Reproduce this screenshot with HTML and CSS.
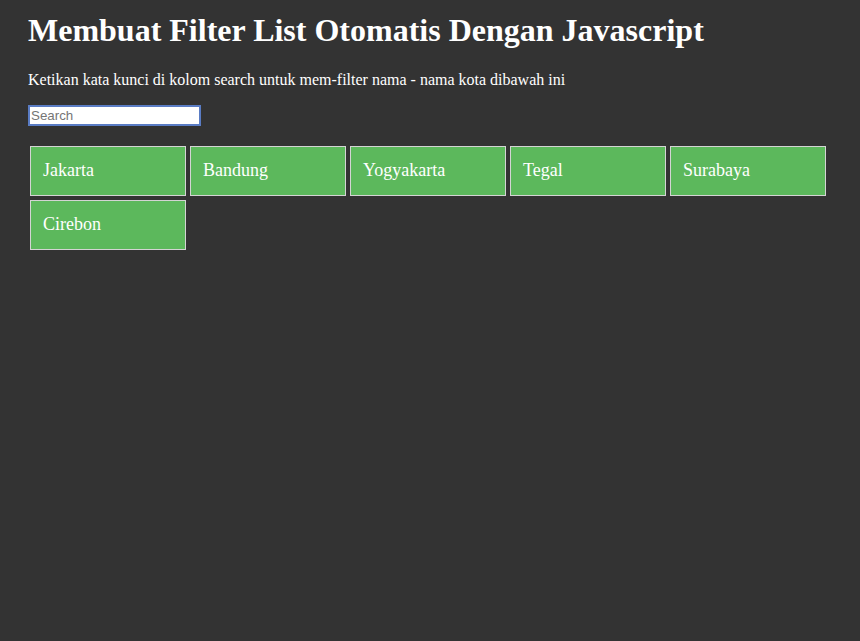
FILE: index.html
```html
<!DOCTYPE html>
<html lang="id">
<head>
<meta charset="utf-8">
<title>Membuat Filter List Otomatis Dengan Javascript</title>
<link rel="stylesheet" href="styles.css">
</head>
<body>
<div class="page">
  <h1 class="title">Membuat Filter List Otomatis Dengan Javascript</h1>
  <p class="desc">Ketikan kata kunci di kolom search untuk mem-filter nama - nama kota dibawah ini</p>
  <input class="search" type="text" placeholder="Search">
  <ul class="cities">
    <li class="city">Jakarta</li>
    <li class="city">Bandung</li>
    <li class="city">Yogyakarta</li>
    <li class="city">Tegal</li>
    <li class="city">Surabaya</li>
    <li class="city">Cirebon</li>
  </ul>
</div>
</body>
</html>
```

FILE: styles.css
```css
html, body {
  margin: 0;
  padding: 0;
  background: #333333;
  color: #ffffff;
  font-family: "Liberation Serif", "Times New Roman", serif;
}
.page {
  padding: 12px 28px;
  width: 800px;
}
.title {
  margin: 0;
  font-size: 32px;
  line-height: 37px;
  font-weight: bold;
}
.desc {
  margin: 22px 0 16px;
  font-size: 16px;
  line-height: 18px;
}
.search {
  display: block;
  box-sizing: border-box;
  width: 173px;
  height: 21px;
  margin: 0;
  padding: 1px 1px;
  border: 2px solid #5a7cc4;
  background: #ffffff;
  font-family: "Liberation Sans", Arial, sans-serif;
  font-size: 13.33px;
  color: #000;
  outline: none;
}
.search::placeholder {
  color: #757575;
}
.cities {
  list-style: none;
  margin: 18px 0 0;
  padding: 0;
  display: flex;
  flex-wrap: wrap;
}
.city {
  box-sizing: border-box;
  width: 156px;
  height: 50px;
  margin: 2px;
  padding: 13px 12px 9px;
  background: #5cb85c;
  border: 1px solid #d4d4d4;
  font-size: 18px;
  line-height: 21px;
  color: #ffffff;
}
```
